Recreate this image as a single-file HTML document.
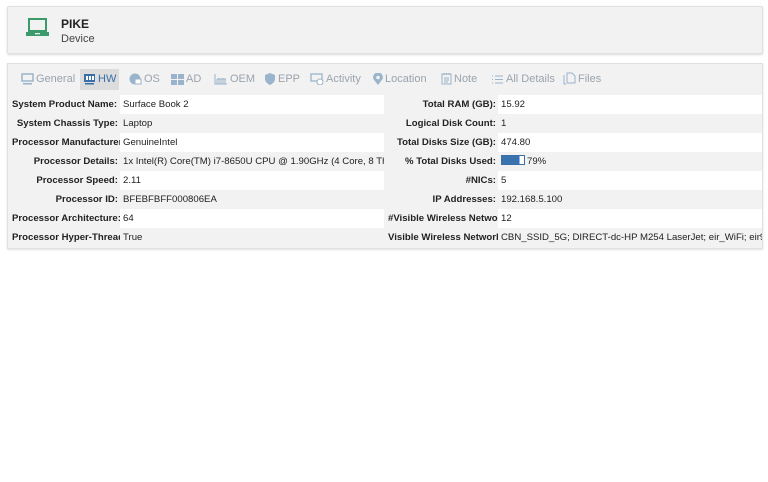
<!DOCTYPE html>
<html><head><style>
body{margin:0;background:#fff;font-family:"Liberation Sans",Arial,sans-serif;width:768px;height:482px;overflow:hidden;position:relative}
.hdr{position:absolute;left:7px;top:6px;width:754px;height:46px;background:#f2f2f2;border:1px solid #e0e0e0;border-radius:2px;box-shadow:0 1px 2px rgba(0,0,0,.15)}
.hdr .t{position:absolute;left:53px;top:10px;font-size:12px;font-weight:bold;color:#222}
.hdr .s{position:absolute;left:53px;top:26px;font-size:11px;color:#444}
.card{position:absolute;left:7px;top:63px;width:754px;height:184px;background:#f2f2f2;border:1px solid #e0e0e0;box-shadow:0 1px 2px rgba(0,0,0,.12)}
.tb{position:absolute;left:0;top:0;height:28px;width:754px}
.tab{position:absolute;top:5px;height:21px;line-height:21px;font-size:11px;color:#9aa3ad;padding:0 3px}
.tab svg{vertical-align:-3px;margin-right:2px}
.row{position:absolute;left:0;width:754px;height:19px;font-size:9.6px;line-height:19px;color:#222}
.l{position:absolute;font-weight:bold;text-align:right;white-space:nowrap;overflow:hidden}
.v{position:absolute;white-space:nowrap;overflow:hidden;padding-left:3px;box-sizing:border-box}
.w{background:#fff}
</style></head><body>
<div class="hdr">
<svg style="position:absolute;left:18px;top:11px" width="23" height="19" viewBox="0 0 23 19"><rect x="3" y="1" width="17" height="12" fill="none" stroke="#3a9a6a" stroke-width="2"/><rect x="0" y="14" width="23" height="4" fill="#3a9a6a"/><rect x="9" y="15" width="5" height="1.3" fill="#f2f2f2"/></svg>
<div class="t">PIKE</div><div class="s">Device</div>
</div>
<div class="card">
<div class="tb">
<div class="tab" style="left:10px"><svg width="13" height="12"><rect x="1" y="1" width="11" height="7" fill="none" stroke="#9ab4cc" stroke-width="1.5"/><rect x="2" y="10" width="9" height="1.5" fill="#9ab4cc"/></svg>General</div>
<div class="tab" style="left:72px;background:#dcdcdc;color:#3a6fa8"><svg width="13" height="12"><rect x="1" y="1" width="11" height="8" fill="#3a6fa8"/><rect x="3" y="3" width="2" height="4" fill="#fff"/><rect x="6" y="3" width="2" height="4" fill="#fff"/><rect x="9" y="3" width="2" height="4" fill="#fff"/><rect x="2" y="10" width="9" height="1.5" fill="#3a6fa8"/></svg>HW</div>
<div class="tab" style="left:118px"><svg width="13" height="12"><circle cx="6" cy="6" r="5.5" fill="#9ab4cc"/><rect x="6" y="6" width="6" height="5" fill="#fff" stroke="#9ab4cc"/></svg>OS</div>
<div class="tab" style="left:160px"><svg width="13" height="12"><rect x="0" y="1" width="6" height="5" fill="#9ab4cc"/><rect x="7" y="1" width="6" height="5" fill="#9ab4cc"/><rect x="0" y="7" width="6" height="5" fill="#9ab4cc"/><rect x="7" y="7" width="6" height="5" fill="#9ab4cc"/></svg>AD</div>
<div class="tab" style="left:203px"><svg width="14" height="12"><path d="M1 1V11H13M3 11V6M5 11V5M7 11V6M9 11V5M11 11V6M3 6H12" stroke="#9ab4cc" fill="none"/></svg>OEM</div>
<div class="tab" style="left:253px"><svg width="12" height="12"><path d="M6 0L11 2V6C11 9 8 11 6 12C4 11 1 9 1 6V2Z" fill="#9ab4cc"/></svg>EPP</div>
<div class="tab" style="left:299px"><svg width="14" height="12"><rect x="1" y="1" width="11" height="7" fill="none" stroke="#9ab4cc" stroke-width="1.3"/><circle cx="10" cy="9" r="3" fill="#fff" stroke="#9ab4cc"/></svg>Activity</div>
<div class="tab" style="left:362px"><svg width="10" height="12"><path d="M5 12C2 8 0 6 0 4.5A5 5 0 0 1 10 4.5C10 6 8 8 5 12Z" fill="#9ab4cc"/><circle cx="5" cy="4.5" r="1.8" fill="#f2f2f2"/></svg>Location</div>
<div class="tab" style="left:430px"><svg width="11" height="13"><rect x="1" y="2" width="9" height="10" fill="none" stroke="#9ab4cc"/><path d="M3 6H8M3 8H8M3 10H7M3 1V3M5.5 1V3M8 1V3" stroke="#9ab4cc"/></svg>Note</div>
<div class="tab" style="left:480px"><svg width="13" height="11"><path d="M1 2H2M1 5.5H2M1 9H2M4 2H12M4 5.5H12M4 9H12" stroke="#9ab4cc"/></svg>All Details</div>
<div class="tab" style="left:552px"><svg width="13" height="13"><path d="M1 3V12H3M4 1H9L12 4V11H4Z" stroke="#9ab4cc" fill="none"/></svg>Files</div>
</div>

<div class="row" style="top:31px"><div class="l" style="left:0;width:110px;text-align:left;padding-left:4px">System Product Name:</div><div class="v w" style="left:112px;width:264px">Surface Book 2</div><div class="l" style="left:376px;width:112px">Total RAM (GB):</div><div class="v w" style="left:490px;width:264px">15.92</div></div>
<div class="row" style="top:50px"><div class="l" style="left:0;width:110px">System Chassis Type:</div><div class="v" style="left:112px;width:264px">Laptop</div><div class="l" style="left:376px;width:112px">Logical Disk Count:</div><div class="v" style="left:490px;width:264px">1</div></div>
<div class="row" style="top:69px"><div class="l" style="left:4px;width:108px;text-align:left">Processor Manufacturer</div><div class="v w" style="left:112px;width:264px">GenuineIntel</div><div class="l" style="left:376px;width:112px">Total Disks Size (GB):</div><div class="v w" style="left:490px;width:264px">474.80</div></div>
<div class="row" style="top:88px"><div class="l" style="left:0;width:110px">Processor Details:</div><div class="v" style="left:112px;width:264px">1x Intel(R) Core(TM) i7-8650U CPU @ 1.90GHz (4 Core, 8 Threads)</div><div class="l" style="left:376px;width:112px">% Total Disks Used:</div><div class="v" style="left:490px;width:264px"><span style="display:inline-block;width:22px;height:8px;border:1px solid #3a6fa8;vertical-align:-1px;background:linear-gradient(90deg,#3a72b0 79%,#fff 79%);margin-right:2px"></span>79%</div></div>
<div class="row" style="top:107px"><div class="l" style="left:0;width:110px">Processor Speed:</div><div class="v w" style="left:112px;width:264px">2.11</div><div class="l" style="left:376px;width:112px">#NICs:</div><div class="v w" style="left:490px;width:264px">5</div></div>
<div class="row" style="top:126px"><div class="l" style="left:0;width:110px">Processor ID:</div><div class="v" style="left:112px;width:264px">BFEBFBFF000806EA</div><div class="l" style="left:376px;width:112px">IP Addresses:</div><div class="v" style="left:490px;width:264px">192.168.5.100</div></div>
<div class="row" style="top:145px"><div class="l" style="left:4px;width:108px;text-align:left">Processor Architecture:</div><div class="v w" style="left:112px;width:264px">64</div><div class="l" style="left:380px;width:110px;text-align:left">#Visible Wireless Networks:</div><div class="v w" style="left:490px;width:264px">12</div></div>
<div class="row" style="top:164px"><div class="l" style="left:4px;width:108px;text-align:left">Processor Hyper-Threading:</div><div class="v" style="left:112px;width:264px">True</div><div class="l" style="left:380px;width:110px;text-align:left">Visible Wireless Networks:</div><div class="v" style="left:490px;width:264px">CBN_SSID_5G; DIRECT-dc-HP M254 LaserJet; eir_WiFi; eir9</div></div>
</div>
</body></html>
